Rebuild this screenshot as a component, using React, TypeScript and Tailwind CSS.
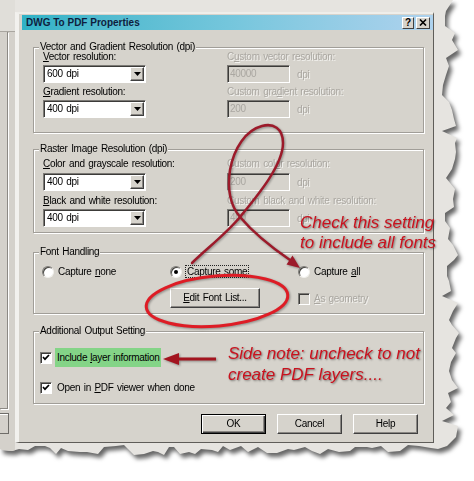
import React from 'react';

// torn paper outline, jagged right and bottom edges
function tornEdge(): string {
  let s = 11;
  const rnd = () => {
    s = (s * 9301 + 49297) % 233280;
    return s / 233280;
  };
  const pts: string[] = ['0px 0px'];
  for (let y = 0; y <= 438; y += 5 + Math.floor(rnd() * 7)) {
    pts.push(`${Math.round(441 + rnd() * 18)}px ${y}px`);
  }
  pts.push('447px 446px');
  for (let x = 438; x >= 0; x -= 5 + Math.floor(rnd() * 8)) {
    pts.push(`${x}px ${Math.round(445 + rnd() * 10)}px`);
  }
  pts.push('0px 449px');
  return `polygon(${pts.join(',')})`;
}

const disabledText = 'text-[#aaa7a1] [text-shadow:1px_1px_0_#f3f2ef]';

function Label({ children, disabled, className = '' }: { children: React.ReactNode; disabled?: boolean; className?: string }) {
  return <div className={`h-[12px] leading-[12px] whitespace-nowrap ${disabled ? disabledText : ''} ${className}`}>{children}</div>;
}

function U({ children }: { children: React.ReactNode }) {
  return <span className="underline underline-offset-[1px]">{children}</span>;
}

function Select({ value, className = '' }: { value: string; className?: string }) {
  return (
    <div className={`w-[103px] h-[18px] bg-white flex items-center border border-t-[#7c7a76] border-l-[#7c7a76] border-r-white border-b-white shadow-[inset_1px_1px_0_#3c3b39] ${className}`}>
      <span className="pl-[3px] flex-1 leading-[12px]">{value}</span>
      <div className="w-[14px] h-[14px] mr-px bg-[#d6d3cc] border border-t-white border-l-white border-r-[#404040] border-b-[#404040] shadow-[inset_-1px_-1px_0_#8a8783] flex items-center justify-center">
        <svg width="7" height="4" viewBox="0 0 7 4">
          <path d="M0 0h7L3.5 4z" fill="#000" />
        </svg>
      </div>
    </div>
  );
}

function DisabledInput({ value, className = '' }: { value: string; className?: string }) {
  return (
    <div className={`flex items-center ${className}`}>
      <div className="w-[63px] h-[18px] bg-[#d6d3cc] border border-t-[#7c7a76] border-l-[#7c7a76] border-r-white border-b-white shadow-[inset_1px_1px_0_#3c3b39] pl-[2px] leading-[15px] text-[#aaa7a1]">
        {value}
      </div>
      <span className={`ml-[7px] mt-[2px] leading-[12px] ${disabledText}`}>dpi</span>
    </div>
  );
}

function Check({ checked, disabled }: { checked?: boolean; disabled?: boolean }) {
  return (
    <div
      className={`w-[12px] h-[12px] shrink-0 ${disabled ? 'bg-[#d6d3cc]' : 'bg-white'} border border-t-[#7c7a76] border-l-[#7c7a76] border-r-white border-b-white shadow-[inset_1px_1px_0_#3c3b39] flex items-center justify-center`}
    >
      {checked && (
        <svg width="8" height="7" viewBox="0 0 8 7">
          <path d="M1 3l2 2.2L7 1" stroke="#000" strokeWidth="1.7" fill="none" />
        </svg>
      )}
    </div>
  );
}

function Radio({ checked }: { checked?: boolean }) {
  return (
    <div className="w-[12px] h-[12px] shrink-0 rounded-full bg-white border border-t-[#7c7a76] border-l-[#7c7a76] border-r-[#f1f0ec] border-b-[#f1f0ec] shadow-[inset_1px_1px_0_#45443f] flex items-center justify-center">
      {checked && <div className="w-[4px] h-[4px] rounded-full bg-black" />}
    </div>
  );
}

function Btn({ children, isDefault, className = '' }: { children: React.ReactNode; isDefault?: boolean; className?: string }) {
  return (
    <div
      className={`h-[20px] flex items-center justify-center bg-[#d6d3cc] border leading-[12px] ${
        isDefault
          ? 'border-black shadow-[inset_1px_1px_0_#fff,inset_-1px_-1px_0_#404040,inset_-2px_-2px_0_#8a8783]'
          : 'border-t-white border-l-white border-r-[#404040] border-b-[#404040] shadow-[inset_-1px_-1px_0_#8a8783]'
      } ${className}`}
    >
      {children}
    </div>
  );
}

function Group({ title, className = '', children }: { title: string; className?: string; children: React.ReactNode }) {
  return (
    <div className={`ml-[11px] mr-[9px] border border-[#a19e98] shadow-[inset_1px_1px_0_#fff,1px_1px_0_#fff] ${className}`}>
      <div className="-mt-[6px] ml-[5px] w-fit h-[10px] leading-[10px] px-px bg-[#d6d3cc] whitespace-nowrap">{title}</div>
      {children}
    </div>
  );
}

function ParentStrip() {
  return (
    <div className="w-[15px] shrink-0 flex flex-col bg-[#d4d1cb]">
      <div className="h-[32px] bg-[#e0ded9] border-b border-[#a9a6a0]" />
      <div className="h-[377px] w-[8px] border-r border-b border-[#8c8984] shadow-[1px_1px_0_#fff]" />
      <div className="mt-[4px] h-[21px] w-[9px] border-r border-y border-[#6f6d69] shadow-[inset_0_1px_0_#fff]" />
    </div>
  );
}

function Dialog() {
  return (
    <div className="mt-[12px] w-[419px] h-[431px] shrink-0 flex flex-col bg-[#d6d3cc] border-l-[4px] border-l-[#f2f1ee] border-t-2 border-t-[#efeeea] border-r border-r-[#5f5d59] border-b border-b-[#5f5d59] pl-[3px] pt-px">
      {/* title bar */}
      <div className="h-[15px] flex items-center bg-gradient-to-r from-[#2fb2c6] via-[#74c6dc] to-[#aed2ee]">
        <span className="pl-[4px] flex-1 font-['Liberation_Sans',Arial,sans-serif] font-bold text-[10px] tracking-normal [word-spacing:0] text-[#0f1e3e]">
          DWG To PDF Properties
        </span>
        <div className="w-[12px] h-[12px] bg-[#d6d3cc] border border-t-white border-l-white border-r-[#404040] border-b-[#404040] flex items-center justify-center font-['Liberation_Sans',Arial,sans-serif] font-bold text-[10px] leading-none">
          ?
        </div>
        <div className="ml-[2px] mr-[3px] w-[14px] h-[12px] bg-[#d6d3cc] border border-t-white border-l-white border-r-[#404040] border-b-[#404040] flex items-center justify-center">
          <svg width="8" height="7" viewBox="0 0 8 7">
            <path d="M1 0.5l6 6M7 0.5l-6 6" stroke="#000" strokeWidth="1.6" />
          </svg>
        </div>
      </div>

      <Group title="Vector and Gradient Resolution (dpi)" className="mt-[17px] pb-[14px]">
        <div className="flex pl-[9px]">
          <div className="w-[184px]">
            <Label className="-mt-px">
              <U>V</U>ector resolution:
            </Label>
            <Select value="600 dpi" className="mt-[2px]" />
            <Label className="mt-[3px]">
              <U>G</U>radient resolution:
            </Label>
            <Select value="400 dpi" className="mt-[2px]" />
          </div>
          <div>
            <Label disabled className="-mt-px">
              C<U>u</U>stom vector resolution:
            </Label>
            <DisabledInput value="40000" className="mt-[2px]" />
            <Label disabled className="mt-[3px]">
              Custom gra<U>d</U>ient resolution:
            </Label>
            <DisabledInput value="200" className="mt-[2px]" />
          </div>
        </div>
      </Group>

      <Group title="Raster Image Resolution (dpi)" className="mt-[16px] pb-[5px]">
        <div className="flex pl-[9px]">
          <div className="w-[184px]">
            <Label className="mt-[4px]">
              <U>C</U>olor and grayscale resolution:
            </Label>
            <Select value="400 dpi" className="mt-[3px]" />
            <Label className="mt-[4px]">
              <U>B</U>lack and white resolution:
            </Label>
            <Select value="400 dpi" className="mt-[2px]" />
          </div>
          <div>
            <Label disabled className="mt-[4px]">
              Custom col<U>o</U>r resolution:
            </Label>
            <DisabledInput value="200" className="mt-[3px]" />
            <Label disabled className="mt-[4px]">
              Custom black and white resolution:
            </Label>
            <DisabledInput value="400" className="mt-[2px]" />
          </div>
        </div>
      </Group>

      <Group title="Font Handling" className="mt-[19px] pb-[5px]">
        <div className="flex pl-[8px] mt-[8px] h-[13px] items-center">
          <div className="w-[128px] flex items-center gap-[4px]">
            <Radio />
            <span className="leading-[12px]">
              Capture <U>n</U>one
            </span>
          </div>
          <div className="w-[128px] flex items-center gap-[3px]">
            <Radio checked />
            <span className="leading-[11px] px-px border border-dotted border-[#222]">
              Ca<U>p</U>ture some
            </span>
          </div>
          <div className="flex items-center gap-[4px]">
            <Radio />
            <span className="leading-[12px]">
              Capture <U>a</U>ll
            </span>
          </div>
        </div>
        <div className="flex pl-[136px] mt-[10px]">
          <Btn className="w-[90px]">
            <U>E</U>dit Font List...
          </Btn>
          <div className="ml-[38px] mt-[2px] flex items-center gap-[4px]">
            <Check disabled />
            <span className={`leading-[12px] ${disabledText}`}>
              <U>A</U>s geometry
            </span>
          </div>
        </div>
      </Group>

      <Group title="Additional Output Setting" className="mt-[17px] pb-[6px]">
        <div className="pl-[6px] mt-[12px] h-[19px] flex items-center">
          <Check checked />
          <div className="ml-[3px] h-[19px] w-fit bg-[#84d487] pl-[2px] pr-[2px] flex items-center leading-[12px] whitespace-nowrap [word-spacing:0.5px]">
            Include&nbsp;<U>l</U>ayer information
          </div>
        </div>
        <div className="pl-[6px] mt-[11px] h-[19px] flex items-center gap-[5px]">
          <Check checked />
          <span className="leading-[12px] whitespace-nowrap">
            Open in <U>P</U>DF viewer when done
          </span>
        </div>
      </Group>

      <div className="mt-[10px] mr-[15px] flex justify-end gap-[11px]">
        <Btn isDefault className="w-[65px]">
          OK
        </Btn>
        <Btn className="w-[65px]">Cancel</Btn>
        <Btn className="w-[65px]">Help</Btn>
      </div>
    </div>
  );
}

function Annotations() {
  return (
    <div className="pointer-events-none absolute inset-0 tracking-normal [word-spacing:0]">
      <svg width="474" height="481" className="absolute inset-0 [filter:drop-shadow(1px_1px_1px_rgba(0,0,0,0.35))]">
        <path
          d="M192 263 C205 250 226 234 240 217 C258 195 283 165 283 143 C283 128 273 123 262 126 C246 130 234 148 230 170 C227 190 230 205 240 217 C251 230 268 245 290 260"
          fill="none"
          stroke="#9c1a2a"
          strokeWidth="2.5"
          strokeLinecap="round"
        />
        <polygon points="300,268 286.5,264.5 292.5,255.5" fill="#9c1a2a" />
        <ellipse cx="217" cy="301" rx="71" ry="25" transform="rotate(-5 217 301)" fill="none" stroke="#de1c25" strokeWidth="3" />
        <line x1="216" y1="359" x2="176" y2="359" stroke="#a3141f" strokeWidth="3" />
        <polygon points="163,359 179,353 179,365" fill="#a3141f" />
      </svg>
      <p className="absolute left-[300px] top-[213px] font-['Liberation_Sans',Arial,sans-serif] italic text-[17px] leading-[20px] text-[#c9121e] whitespace-nowrap [text-shadow:1px_1px_2px_rgba(0,0,0,0.45)]">
        Check this setting
        <br />
        to include all fonts
      </p>
      <p className="absolute left-[228px] top-[343px] font-['Liberation_Sans',Arial,sans-serif] italic text-[17px] leading-[21px] text-[#c9121e] whitespace-nowrap [text-shadow:1px_1px_2px_rgba(0,0,0,0.45)]">
        Side note: uncheck to not
        <br />
        create PDF layers....
      </p>
    </div>
  );
}

export default function App() {
  return (
    <div className="relative w-[474px] h-[481px] bg-white overflow-hidden font-['Liberation_Sans',Arial,sans-serif] text-[10px] tracking-[-0.3px] [word-spacing:1px] text-black">
      <div className="[filter:drop-shadow(3px_4px_2px_rgba(0,0,0,0.6))]">
        <div className="h-[462px] flex bg-[#e6e4e0]" style={{ clipPath: tornEdge() }}>
          <ParentStrip />
          <Dialog />
        </div>
      </div>
      <Annotations />
    </div>
  );
}
